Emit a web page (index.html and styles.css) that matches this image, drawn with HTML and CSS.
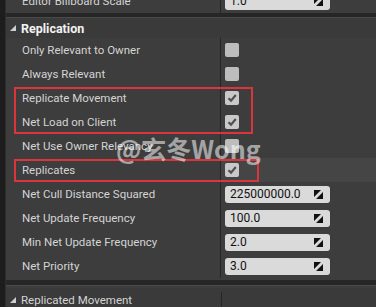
FILE: index.html
```html
<!DOCTYPE html>
<html>
<head>
<meta charset="utf-8">
<link rel="stylesheet" href="styles.css">
</head>
<body>
<div class="app">
  <div class="strip"></div>
  <div class="panel">
    <div class="row top">
      <div class="name">Editor Billboard Scale</div>
      <div class="val"><div class="num"><span>1.0</span><svg class="spin" viewBox="0 0 9 9"><path d="M0 0H7L0 7Z M9 2V9H2Z" fill="#111"/></svg></div></div>
    </div>
    <div class="sep"></div>
    <div class="cat"><span class="tri"></span>Replication</div>
    <div class="row"><div class="name">Only Relevant to Owner</div><div class="val"><span class="cb"></span></div></div>
    <div class="row"><div class="name">Always Relevant</div><div class="val"><span class="cb"></span></div></div>
    <div class="row"><div class="name">Replicate Movement</div><div class="val"><span class="cb on"><svg viewBox="0 0 14 14"><path d="M3.5 7.2L6 9.6L10.8 4" fill="none" stroke="#505050" stroke-width="2.2"/></svg></span></div></div>
    <div class="row"><div class="name">Net Load on Client</div><div class="val"><span class="cb on"><svg viewBox="0 0 14 14"><path d="M3.5 7.2L6 9.6L10.8 4" fill="none" stroke="#505050" stroke-width="2.2"/></svg></span></div></div>
    <div class="row"><div class="name">Net Use Owner Relevancy</div><div class="val"><span class="cb"></span></div></div>
    <div class="row hl"><div class="name">Replicates</div><div class="val"><span class="cb on"><svg viewBox="0 0 14 14"><path d="M3.5 7.2L6 9.6L10.8 4" fill="none" stroke="#505050" stroke-width="2.2"/></svg></span></div></div>
    <div class="row"><div class="name">Net Cull Distance Squared</div><div class="val"><div class="num"><span>225000000.0</span><svg class="spin" viewBox="0 0 9 9"><path d="M0 0H7L0 7Z M9 2V9H2Z" fill="#111"/></svg></div></div></div>
    <div class="row"><div class="name">Net Update Frequency</div><div class="val"><div class="num"><span>100.0</span><svg class="spin" viewBox="0 0 9 9"><path d="M0 0H7L0 7Z M9 2V9H2Z" fill="#111"/></svg></div></div></div>
    <div class="row"><div class="name">Min Net Update Frequency</div><div class="val"><div class="num"><span>2.0</span><svg class="spin" viewBox="0 0 9 9"><path d="M0 0H7L0 7Z M9 2V9H2Z" fill="#111"/></svg></div></div></div>
    <div class="row"><div class="name">Net Priority</div><div class="val"><div class="num"><span>3.0</span><svg class="spin" viewBox="0 0 9 9"><path d="M0 0H7L0 7Z M9 2V9H2Z" fill="#111"/></svg></div></div></div>
    <div class="sep bottom"></div>
    <div class="cat sub"><span class="tri"></span>Replicated Movement<span class="divstub"></span></div>
  </div>
  <div class="box box1"></div>
  <div class="box box2"></div>
  <div class="mark">@玄冬Wong</div>
</div>
</body>
</html>
```
FILE: styles.css
```css
html, body {
  margin: 0;
  padding: 0;
  background: #3d3d3d;
  overflow: hidden;
}
.app {
  position: relative;
  display: flex;
  width: 376px;
  height: 307px;
  font-family: Roboto, "Noto Sans", sans-serif;
  font-size: 11.5px;
  color: #d4d4d4;
}
.strip {
  width: 5px;
  flex: none;
  background: #1d1d1d;
  border-right: 1px solid #2e2e2e;
}
.panel {
  flex: 1;
  margin-top: -11px;
  display: flex;
  flex-direction: column;
}
.panel > * {
  flex: none;
}
.row {
  display: grid;
  grid-template-columns: 215px 1fr;
  height: 24px;
  background: #3d3d3d;
}
.row.hl .val {
  background: #454545;
}
.name {
  display: flex;
  align-items: center;
  padding-left: 16px;
  border-right: 1px solid #262626;
  white-space: nowrap;
  overflow: hidden;
}
.val {
  display: flex;
  align-items: center;
  padding-left: 4px;
}
.cb {
  width: 14px;
  height: 14px;
  border-radius: 2px;
  background: #bdbdbd;
  display: block;
}
.cb.on {
  background: #c9c9c9;
}
.cb svg {
  display: block;
  width: 14px;
  height: 14px;
}
.num {
  width: 105px;
  height: 17px;
  box-sizing: border-box;
  border-radius: 3px;
  background: #dadada;
  color: #111;
  display: flex;
  align-items: center;
  justify-content: space-between;
  padding: 0 7px 0 5px;
  font-size: 12px;
}
.spin {
  width: 9px;
  height: 9px;
}
.sep {
  height: 4px;
  background: #262626;
  border-bottom: 1px solid #4a4a4a;
}
.sep.bottom {
  height: 5px;
  margin-top: 2px;
}
.cat {
  height: 20px;
  display: flex;
  align-items: center;
  padding-left: 15px;
  background: #3a3a3a;
  color: #f2f2f2;
  font-weight: bold;
  font-size: 12.5px;
  position: relative;
}
.cat.sub {
  font-weight: normal;
  font-size: 11.5px;
  color: #d4d4d4;
  height: 24px;
  margin-top: 2px;
}
.tri {
  width: 0;
  height: 0;
  border-style: solid;
  border-width: 0 0 6px 6px;
  border-color: transparent transparent #cfcfcf transparent;
  position: absolute;
  left: 4px;
  top: 50%;
  margin-top: -3px;
}
.divstub {
  position: absolute;
  left: 215px;
  top: 4px;
  bottom: 0;
  border-left: 1px solid #262626;
}
.box {
  position: absolute;
  border: 2.5px solid #d8353d;
  box-sizing: border-box;
}
.box1 {
  left: 14px;
  top: 87px;
  width: 239px;
  height: 47px;
}
.box2 {
  left: 14px;
  top: 159px;
  width: 245px;
  height: 23px;
}
.mark {
  position: absolute;
  left: 116px;
  top: 130px;
  font-family: "Noto Sans CJK SC", "Noto Sans", sans-serif;
  font-weight: bold;
  font-size: 25px;
  color: rgba(255, 255, 255, 0.55);
  white-space: nowrap;
}
```
